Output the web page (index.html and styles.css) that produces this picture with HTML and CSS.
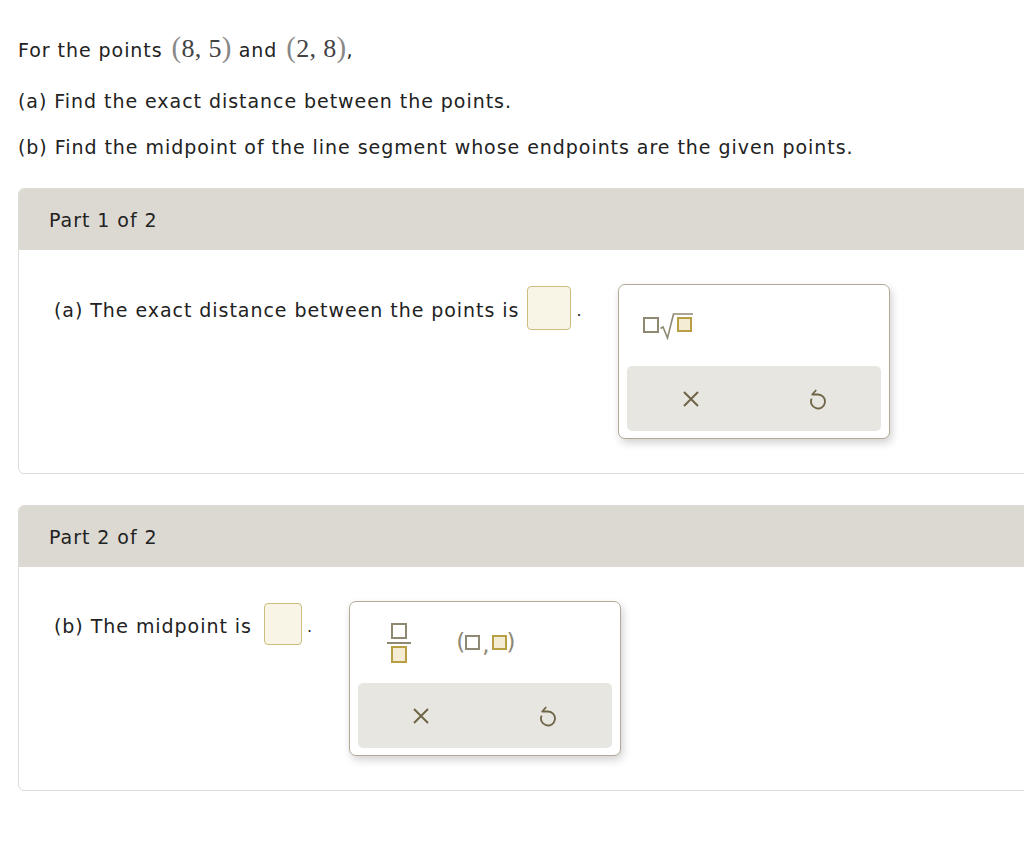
FILE: index.html
```html
<!DOCTYPE html>
<html>
<head>
<meta charset="utf-8">
<link rel="stylesheet" href="styles.css">
</head>
<body>
<div class="page">
  <div class="prompt">
    <p class="line l1">For the points <span class="math"><span class="mp">(</span>8, 5<span class="mp">)</span></span> and <span class="math"><span class="mp">(</span>2, 8<span class="mp">)</span></span>,</p>
    <p class="line l2">(a) Find the exact distance between the points.</p>
    <p class="line l3">(b) Find the midpoint of the line segment whose endpoints are the given points.</p>
  </div>

  <div class="card">
    <div class="card-head">Part 1 of 2</div>
    <div class="card-body">
      <div class="answer">
        <span class="answer-text">(a) The exact distance between the points is</span>
        <span class="ansbox big"></span>
        <span class="dot">.</span>
      </div>
      <div class="popup">
        <div class="tools">
          <div class="tool">
            <svg width="52" height="28" viewBox="0 0 52 28">
              <rect x="2" y="6" width="14" height="14" fill="#fff" stroke="#8f8873" stroke-width="2"/>
              <path d="M18.5 16.5 L21 15 L25.5 26 L31.5 2 L51 2" fill="none" stroke="#8f8873" stroke-width="1.6"/>
              <rect x="36" y="6" width="13" height="13" fill="#f4edd3" stroke="#b89e45" stroke-width="2"/>
            </svg>
          </div>
        </div>
        <div class="actions">
          <div class="act">
            <svg width="18" height="18" viewBox="0 0 18 18"><path d="M2 2 L16 16 M16 2 L2 16" stroke="#6e6447" stroke-width="2" fill="none"/></svg>
          </div>
          <div class="act">
            <svg width="20" height="22" viewBox="0 0 20 22"><path d="M10 6.5 A7 7 0 1 1 3.6 10.6" fill="none" stroke="#6e6447" stroke-width="1.8"/><path d="M8.2 2 L4.2 6.5 L10 6.5" fill="none" stroke="#6e6447" stroke-width="1.8" stroke-linejoin="round"/></svg>
          </div>
        </div>
      </div>
    </div>
  </div>

  <div class="card">
    <div class="card-head">Part 2 of 2</div>
    <div class="card-body">
      <div class="answer">
        <span class="answer-text">(b) The midpoint is</span>
        <span class="ansbox small"></span>
        <span class="dot">.</span>
      </div>
      <div class="popup">
        <div class="tools">
          <div class="tool">
            <svg width="26" height="42" viewBox="0 0 26 42">
              <rect x="6" y="2" width="14" height="14" fill="#fff" stroke="#8f8873" stroke-width="2"/>
              <path d="M1 21 L25 21" stroke="#8f8873" stroke-width="2"/>
              <rect x="6" y="25" width="14" height="15" fill="#f4edd3" stroke="#b89e45" stroke-width="2"/>
            </svg>
          </div>
          <div class="tool pair">
            <span class="paren">(</span><span class="tb gray"></span><span class="comma">,</span><span class="tb gold"></span><span class="paren">)</span>
          </div>
        </div>
        <div class="actions">
          <div class="act">
            <svg width="18" height="18" viewBox="0 0 18 18"><path d="M2 2 L16 16 M16 2 L2 16" stroke="#6e6447" stroke-width="2" fill="none"/></svg>
          </div>
          <div class="act">
            <svg width="20" height="22" viewBox="0 0 20 22"><path d="M10 6.5 A7 7 0 1 1 3.6 10.6" fill="none" stroke="#6e6447" stroke-width="1.8"/><path d="M8.2 2 L4.2 6.5 L10 6.5" fill="none" stroke="#6e6447" stroke-width="1.8" stroke-linejoin="round"/></svg>
          </div>
        </div>
      </div>
    </div>
  </div>
</div>
</body>
</html>
```
FILE: styles.css
```css
html, body {
  margin: 0;
  padding: 0;
  overflow: hidden;
  background: #fff;
}
body {
  font-family: "DejaVu Sans", Verdana, sans-serif;
  font-size: 19px;
  letter-spacing: 0.95px;
  color: #222;
}
.page {
  width: 1040px;
  padding-left: 18px;
}
.prompt {
  padding-top: 36px;
}
.line {
  margin: 0;
  height: 28px;
  line-height: 28px;
  white-space: nowrap;
}
.l2 { margin-top: 23px; }
.l3 { margin-top: 18px; }
.math {
  font-family: "Liberation Serif", "Times New Roman", serif;
  font-size: 26px;
  line-height: 0;
  letter-spacing: 0.3px;
  color: #444;
  margin-left: 2px;
}
.mp {
  color: #888;
  font-size: 29px;
  font-weight: 300;
}
.prompt + .card { margin-top: 27px; }
.card {
  width: 1020px;
  border: 1px solid #dedcd8;
  border-radius: 6px;
  overflow: hidden;
  margin-top: 31px;
}
.card-head {
  background: #dcd9d2;
  height: 61px;
  line-height: 62px;
  padding-left: 30px;
}
.card-body {
  display: flex;
  align-items: flex-start;
  min-height: 189px;
  padding: 34px 0 0 35px;
}
.answer {
  display: flex;
  align-items: center;
  margin-top: 2px;
  white-space: nowrap;
}
.answer-text {
  padding-top: 4px;
}
.ansbox {
  display: inline-block;
  box-sizing: border-box;
  background: #f8f5e7;
  border: 1.5px solid #cbbd7f;
  border-radius: 4px;
  margin-left: 8px;
}
.ansbox.big { width: 44px; height: 44px; }
.ansbox.small { width: 38px; height: 42px; margin-left: 12px; }
.dot {
  margin-left: 5px;
  font-size: 16px;
  padding-top: 4px;
}
.popup {
  margin-left: 36px;
  width: 272px;
  box-sizing: border-box;
  border: 1px solid #b3aa95;
  border-radius: 7px;
  background: #fff;
  box-shadow: 2px 4px 8px rgba(0,0,0,0.18);
  padding: 8px 8px 7px 8px;
  letter-spacing: 0;
}
.tools {
  display: flex;
  gap: 17px;
  height: 65px;
  padding-left: 6px;
  margin-bottom: 8px;
}
.tool {
  width: 70px;
  display: flex;
  align-items: center;
  justify-content: center;
}
.pair {
  color: #8f8873;
  font-size: 23px;
  align-items: center;
}
.paren { line-height: 1; }
.comma { line-height: 1; margin: 4px 2px 0 2px; }
.tb {
  display: inline-block;
  box-sizing: border-box;
  width: 15px;
  height: 15px;
  border: 2px solid #8f8873;
  background: #fff;
}
.tb.gold {
  border-color: #b89e45;
  background: #f4edd3;
}
.actions {
  display: flex;
  height: 65px;
  background: #e8e6e1;
  border-radius: 5px;
}
.act {
  flex: 1;
  display: flex;
  align-items: center;
  justify-content: center;
}
```
